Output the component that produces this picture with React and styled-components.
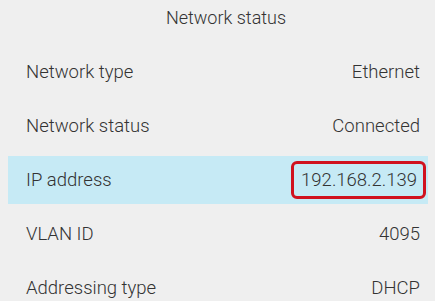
import styled, { createGlobalStyle } from "styled-components";

const GlobalStyle = createGlobalStyle`
  html, body {
    margin: 0;
    padding: 0;
    background: #efefef;
  }
  body {
    font-family: Roboto, "Liberation Sans", sans-serif;
    color: #333;
  }
`;

const Screen = styled.div`
  width: 435px;
  height: 301px;
  overflow: hidden;
  background: #efefef;
  display: flex;
  flex-direction: column;
`;

const Title = styled.div`
  height: 34px;
  padding: 7px 0 0 17px;
  display: flex;
  align-items: center;
  justify-content: center;
  font-size: 18px;
  font-weight: 300;
  color: #333;
`;

const List = styled.div`
  display: flex;
  flex-direction: column;
  gap: 6px;
  padding: 20px 7px 0 8px;
`;

const Row = styled.div`
  height: 48px;
  flex-shrink: 0;
  display: flex;
  align-items: center;
  justify-content: space-between;
  padding: 0 8px 0 18px;
  background: ${(p) => (p.$active ? "#c6eaf5" : "transparent")};
  font-size: 18.5px;
  font-weight: 300;
`;

const Label = styled.span``;

const Value = styled.span`
  position: relative;
  padding: 0 ${(p) => (p.$marked ? "3px" : "0")};
`;

const Mark = styled.span`
  position: absolute;
  left: -7px;
  right: -6px;
  top: -8px;
  bottom: -8px;
  border: 3px solid #d0121f;
  border-radius: 6px;
`;

const rows = [
  { label: "Network type", value: "Ethernet" },
  { label: "Network status", value: "Connected" },
  { label: "IP address", value: "192.168.2.139", active: true },
  { label: "VLAN ID", value: "4095" },
  { label: "Addressing type", value: "DHCP" },
];

function App() {
  return (
    <Screen>
      <GlobalStyle />
      <Title>Network status</Title>
      <List>
        {rows.map((r) => (
          <Row key={r.label} $active={r.active}>
            <Label>{r.label}</Label>
            <Value $marked={r.active}>
              {r.value}
              {r.active && <Mark />}
            </Value>
          </Row>
        ))}
      </List>
    </Screen>
  );
}

export default App;
